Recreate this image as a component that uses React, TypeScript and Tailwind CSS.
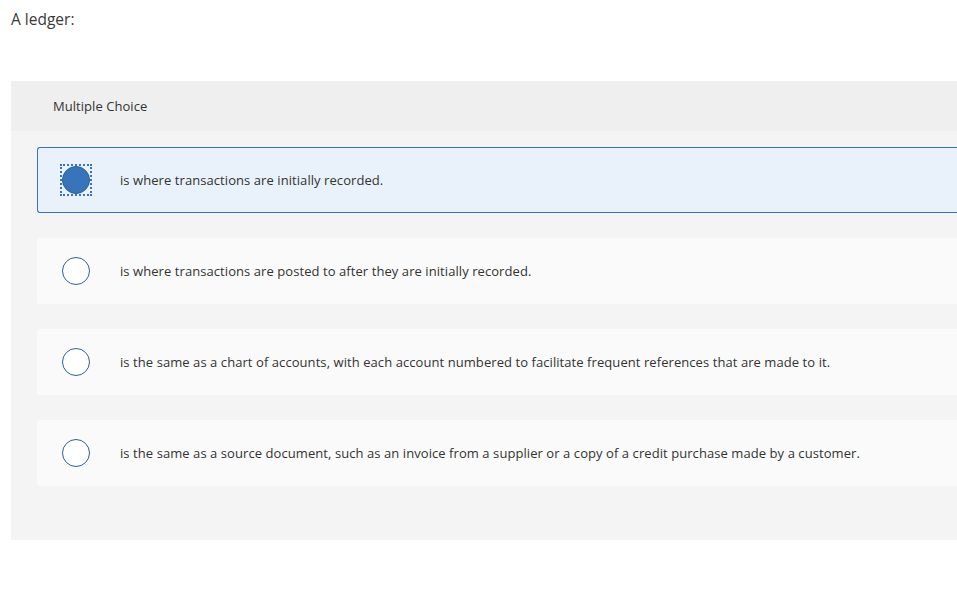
const options = [
  'is where transactions are initially recorded.',
  'is where transactions are posted to after they are initially recorded.',
  'is the same as a chart of accounts, with each account numbered to facilitate frequent references that are made to it.',
  'is the same as a source document, such as an invoice from a supplier or a copy of a credit purchase made by a customer.',
]

function Radio({ checked }: { checked: boolean }) {
  if (checked) {
    return (
      <span className="flex size-[32px] shrink-0 items-center justify-center outline-2 outline-dotted outline-[#3a76c0] -outline-offset-2">
        <span className="size-[28px] rounded-full border border-[#2f5f98] bg-[#3874ba]" />
      </span>
    )
  }
  return (
    <span className="flex size-[32px] shrink-0 items-center justify-center">
      <span className="size-[28px] rounded-full border-[1.5px] border-[#2d5f99] bg-white" />
    </span>
  )
}

export default function App() {
  return (
    <div className="min-h-[615px] bg-white font-['Open_Sans',sans-serif] text-[#333]">
      <div className="px-[11px] pt-[9px] text-[15.5px] leading-[20px] text-[#3a3a3a]">A ledger:</div>
      <div className="ml-[11px] mt-[52px] bg-[#f4f4f4]">
        <div className="flex h-[50px] items-center bg-[#efefef] pl-[42px] pt-[2px] text-[13px] tracking-[0.05px] text-[#333]">
          Multiple Choice
        </div>
        <div className="flex flex-col gap-[25px] pb-[54px] pl-[26px] pt-[16px]">
          {options.map((text, i) => (
            <div
              key={i}
              className={
                i === 0
                  ? 'flex h-[66px] items-center rounded-l-[3px] border border-r-0 border-[#3b73b9] bg-[#e9f1fb] pl-[22px]'
                  : 'flex h-[66px] items-center rounded-l-[3px] border border-r-0 border-transparent bg-[#fafafa] pl-[22px]'
              }
            >
              <Radio checked={i === 0} />
              <span className="pl-[28px] pt-[2px] text-[13px] tracking-[0.07px] text-[#333]">{text}</span>
            </div>
          ))}
        </div>
      </div>
    </div>
  )
}
